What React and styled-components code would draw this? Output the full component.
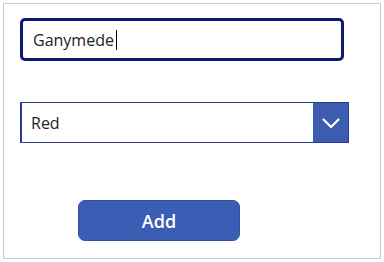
import React from "react";
import styled, { createGlobalStyle } from "styled-components";

const Global = createGlobalStyle`
  html, body { margin: 0; padding: 0; background: #ffffff; }
  body { font-family: "Open Sans", "Noto Sans", sans-serif; }
  * { box-sizing: border-box; }
`;

const Frame = styled.div`
  margin: 3px 0 0 3px;
  width: 378px;
  height: 256px;
  border: 1px solid #c8c8c8;
  background: #fff;
  display: flex;
  flex-direction: column;
  padding: 14px 0 0 16px;
`;

const TextBox = styled.div`
  width: 324px;
  height: 43px;
  border: 3px solid #0b1a72;
  border-radius: 5px;
  display: flex;
  align-items: center;
  padding-left: 10px;
  font-size: 16px;
  color: #222;
`;

const Caret = styled.span`
  display: inline-block;
  width: 1px;
  height: 20px;
  background: #000;
  margin-left: 2px;
`;

const Select = styled.div`
  margin-top: 41px;
  width: 329px;
  height: 41px;
  display: flex;
  border: 1px solid #2a3b8f;
  border-left-width: 2px;
`;

const SelectValue = styled.div`
  flex: 1;
  display: flex;
  align-items: center;
  padding-left: 9px;
  font-size: 16px;
  color: #222;
`;

const Chevron = styled.div`
  width: 35px;
  background: #3c5daf;
  display: flex;
  align-items: center;
  justify-content: center;
`;

const AddButton = styled.button`
  margin: 57px 0 0 58px;
  width: 162px;
  height: 41px;
  border: 1px solid #34519e;
  border-radius: 7px;
  background: #3b5db4;
  color: #fff;
  font-family: "Open Sans", "Noto Sans", sans-serif;
  font-weight: 600;
  font-size: 18px;
  padding: 0;
`;

export default function App() {
  return (
    <>
      <Global />
      <Frame>
        <TextBox>
          Ganymede<Caret />
        </TextBox>
        <Select>
          <SelectValue>Red</SelectValue>
          <Chevron>
            <svg width="20" height="12" viewBox="0 0 20 12">
              <path d="M2 2 L10 10 L18 2" fill="none" stroke="#fff" strokeWidth="2.2" />
            </svg>
          </Chevron>
        </Select>
        <AddButton>Add</AddButton>
      </Frame>
    </>
  );
}
